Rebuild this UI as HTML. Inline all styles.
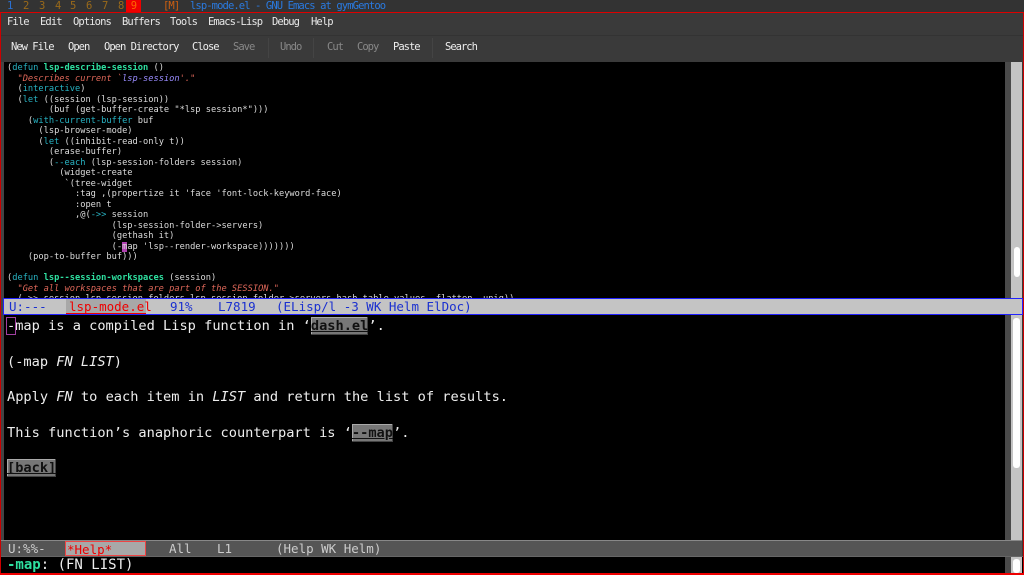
<!DOCTYPE html>
<html><head><meta charset="utf-8"><style>
*{margin:0;padding:0;box-sizing:border-box}
body{width:1024px;height:575px;background:#333;position:relative;overflow:hidden;font-family:"DejaVu Sans Mono","Liberation Mono",monospace}
.a{position:absolute;white-space:pre}
#top{left:0;top:0;width:1024px;height:12px;background:#333;font-size:10.5px;line-height:12px;letter-spacing:-0.9px}
#frame{left:0;top:12px;width:1024px;height:563px;border:1px solid #c00;border-top:1px solid #d00;background:#3a3a3a}
.menu{font-family:"DejaVu Sans Mono",monospace;font-size:10.5px;letter-spacing:-0.9px;color:#e8e8e8;top:16px}
.tb{font-family:"DejaVu Sans Mono",monospace;font-size:10.5px;letter-spacing:-1px;color:#eee;top:41px}
.dim{color:#888}
#code{left:4px;top:62px;width:1001px;height:236px;background:#000;overflow:hidden}
#code pre{position:absolute;left:3px;top:1px;font-family:"DejaVu Sans Mono",monospace;font-size:8.7px;line-height:10.52px;color:#dcdcdc}
.k{color:#28b4c4}.f{color:#2ee0a0;font-weight:bold}.s{color:#e0685a;font-style:italic}.c{color:#9a8cff;font-style:italic}
#help{left:4px;top:315px;width:1001px;height:225px;background:#000}
#help pre{position:absolute;left:3px;top:3px;font-family:"DejaVu Sans Mono",monospace;font-size:13.65px;line-height:17.8px;color:#eee}
.btn{background:#777;color:#111;font-weight:bold;text-decoration:underline;padding:1px 0;box-shadow:inset -1px -1px 0 #444,inset 1px 1px 0 #aaa}
i{font-style:italic}
.ml{font-size:12.5px;line-height:15px}
</style></head><body>
<div id="top" class="a"><span class="a" style="left:7px;color:#2a6fd0">1</span><span class="a" style="left:23px;color:#9a6a1a">2</span><span class="a" style="left:39px;color:#9a6a1a">3</span><span class="a" style="left:55px;color:#9a6a1a">4</span><span class="a" style="left:70px;color:#9a6a1a">5</span><span class="a" style="left:86px;color:#9a6a1a">6</span><span class="a" style="left:102px;color:#9a6a1a">7</span><span class="a" style="left:118px;color:#9a6a1a">8</span><span class="a" style="left:126px;width:15px;height:12px;background:#e00;color:#f60;text-align:center">9</span><span class="a" style="left:163px;color:#d06010">[M]</span><span class="a" style="left:190px;color:#2a7ae0">lsp-mode.el - GNU Emacs at gymGentoo</span></div>
<div id="frame" class="a"></div>
<div class="a" style="left:1px;top:35px;width:1022px;height:1px;background:#333"></div>
<span class="a menu" style="left:7px">File</span><span class="a menu" style="left:40px">Edit</span><span class="a menu" style="left:73px">Options</span><span class="a menu" style="left:122px">Buffers</span><span class="a menu" style="left:170px">Tools</span><span class="a menu" style="left:208px">Emacs-Lisp</span><span class="a menu" style="left:272px">Debug</span><span class="a menu" style="left:311px">Help</span>
<span class="a tb" style="left:11px">New File</span><span class="a tb" style="left:68px">Open</span><span class="a tb" style="left:104px">Open Directory</span><span class="a tb" style="left:192px">Close</span><span class="a tb dim" style="left:233px">Save</span><span class="a tb dim" style="left:280px">Undo</span><span class="a tb dim" style="left:327px">Cut</span><span class="a tb dim" style="left:357px">Copy</span><span class="a tb" style="left:393px">Paste</span><span class="a tb" style="left:445px">Search</span>
<div class="a" style="left:268px;top:38px;width:1px;height:20px;background:#444"></div><div class="a" style="left:313px;top:38px;width:1px;height:20px;background:#444"></div><div class="a" style="left:432px;top:38px;width:1px;height:20px;background:#444"></div>
<div class="a" style="left:0;top:62px;width:4px;height:478px;background:#444;border-left:1px solid #c00"></div>
<div id="code" class="a"><pre>(<span class="k">defun</span> <span class="f">lsp-describe-session</span> ()
  <span class="s">"Describes current `</span><span class="c">lsp-session</span><span class="s">'."</span>
  (<span class="k">interactive</span>)
  (<span class="k">let</span> ((session (lsp-session))
        (buf (get-buffer-create "*lsp session*")))
    (<span class="k">with-current-buffer</span> buf
      (lsp-browser-mode)
      (<span class="k">let</span> ((inhibit-read-only t))
        (erase-buffer)
        (<span class="k">--each</span> (lsp-session-folders session)
          (widget-create
           `(tree-widget
             :tag ,(propertize it 'face 'font-lock-keyword-face)
             :open t
             ,@(<span class="k">-&gt;&gt;</span> session
                    (lsp-session-folder-&gt;servers)
                    (gethash it)
                    (-<span style="background:#b040b0">m</span>ap 'lsp--render-workspace)))))))
    (pop-to-buffer buf)))

(<span class="k">defun</span> <span class="f">lsp--session-workspaces</span> (session)
  <span class="s">"Get all workspaces that are part of the SESSION."</span>
  (-&gt;&gt; session lsp-session-folders lsp-session-folder-&gt;servers hash-table-values -flatten -uniq))</pre></div>
<div class="a" style="left:1005px;top:62px;width:6px;height:236px;background:#4a4a4a"></div>
<div class="a" style="left:1011px;top:62px;width:11px;height:236px;background:#c4c4c4"></div>
<div class="a" style="left:1014px;top:247px;width:6px;height:30px;background:#fff;border-radius:3px"></div>
<div class="a ml" style="left:3px;top:298px;width:1020px;height:17px;background:#c4c4c4;border:1px solid #22f;color:#1a30d0"><span class="a" style="left:5px">U:---</span><span class="a" style="left:62px;width:80px;height:15px;background:#a8a8a8;color:#e00;padding-left:3px;border-bottom:1px solid #e00">lsp-mode.el</span><span class="a" style="left:166px">91%</span><span class="a" style="left:214px">L7819</span><span class="a" style="left:272px">(ELisp/l -3 WK Helm ElDoc)</span></div>
<div id="help" class="a"><pre><span style="outline:1px solid #a040a0">-</span>map is a compiled Lisp function in ‘<span class="btn">dash.el</span>’.

(-map <i>FN LIST</i>)

Apply <i>FN</i> to each item in <i>LIST</i> and return the list of results.

This function’s anaphoric counterpart is ‘<span class="btn">--map</span>’.

<span class="btn">[back]</span></pre></div>
<div class="a" style="left:1005px;top:315px;width:6px;height:225px;background:#4a4a4a"></div>
<div class="a" style="left:1011px;top:315px;width:11px;height:225px;background:#c4c4c4"></div>
<div class="a" style="left:1013px;top:318px;width:7px;height:150px;background:#fff;border-radius:3px"></div>
<div class="a ml" style="left:1px;top:540px;width:1021px;height:16px;background:#555;border-top:1px solid #888;color:#ccc"><span class="a" style="left:7px">U:%%-</span><span class="a" style="left:64px;width:81px;height:15px;background:#a8a8a8;color:#e00;padding-left:1px;border:1px solid #e44">*Help*</span><span class="a" style="left:168px">All</span><span class="a" style="left:216px">L1</span><span class="a" style="left:275px">(Help WK Helm)</span></div>
<div class="a" style="left:1px;top:556px;width:1022px;height:18px;background:#000;border-top:1px solid #666"></div>
<div class="a" style="left:7px;top:556px;font-size:14px;line-height:18px;color:#eee"><span style="color:#2ee0a0;font-weight:bold">-map</span>: (FN LIST)</div>
<div class="a" style="left:1005px;top:557px;width:6px;height:17px;background:#4a4a4a"></div>
<div class="a" style="left:1011px;top:557px;width:11px;height:17px;background:#c4c4c4"></div>
<div class="a" style="left:1013px;top:559px;width:7px;height:14px;background:#fff;border-radius:3px"></div>
<div class="a" style="left:0;top:573px;width:1024px;height:2px;background:#e00"></div>
</body></html>
